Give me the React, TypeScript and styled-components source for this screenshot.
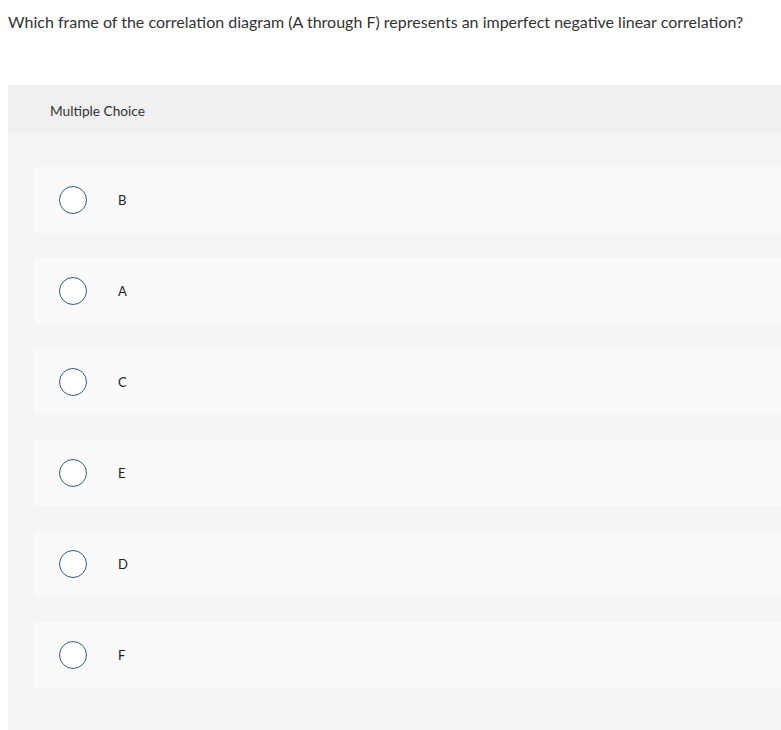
import { createGlobalStyle, styled } from "styled-components";

const options = ["B", "A", "C", "E", "D", "F"];

export default function App() {
  return (
    <>
      <GlobalStyle />
      <Page>
        <Question>
          Which frame of the correlation diagram (A through F) represents an
          imperfect negative linear correlation?
        </Question>
        <Panel>
          <PanelHeader>Multiple Choice</PanelHeader>
          <OptionList>
            {options.map((label) => (
              <OptionRow key={label}>
                <Radio />
                <OptionLabel>{label}</OptionLabel>
              </OptionRow>
            ))}
          </OptionList>
        </Panel>
      </Page>
    </>
  );
}

const GlobalStyle = createGlobalStyle`
  html, body {
    margin: 0;
    padding: 0;
    overflow: hidden;
    background: #ffffff;
  }
  body {
    font-family: "Lato", "Liberation Sans", sans-serif;
    color: #333333;
  }
`;

const Page = styled.div`
  width: 781px;
  height: 730px;
  padding: 0 0 0 8px;
  box-sizing: border-box;
  overflow: hidden;
`;

const Question = styled.div`
  padding-top: 12px;
  height: 85px;
  box-sizing: border-box;
  font-size: 16px;
  line-height: 20px;
  white-space: nowrap;
  color: #333333;
`;

const Panel = styled.div`
  width: 800px;
  background: #f5f5f5;
  border-radius: 3px 0 0 0;
  padding-bottom: 42px;
`;

const PanelHeader = styled.div`
  height: 50px;
  display: flex;
  align-items: center;
  padding-left: 42px;
  background: #f0f0f0;
  border-radius: 3px 0 0 0;
  font-size: 13.7px;
  color: #333333;
`;

const OptionList = styled.div`
  display: flex;
  flex-direction: column;
  gap: 25px;
  padding: 32px 0 0 26px;
`;

const OptionRow = styled.div`
  height: 66px;
  display: flex;
  align-items: center;
  padding-left: 25px;
  background: #fafafa;
  border-radius: 2px;
`;

const Radio = styled.span`
  width: 28px;
  height: 28px;
  box-sizing: border-box;
  border: 1.5px solid #2e5c8a;
  border-radius: 50%;
  background: #ffffff;
  flex-shrink: 0;
`;

const OptionLabel = styled.span`
  margin-left: 31px;
  font-size: 13px;
  color: #222222;
`;
